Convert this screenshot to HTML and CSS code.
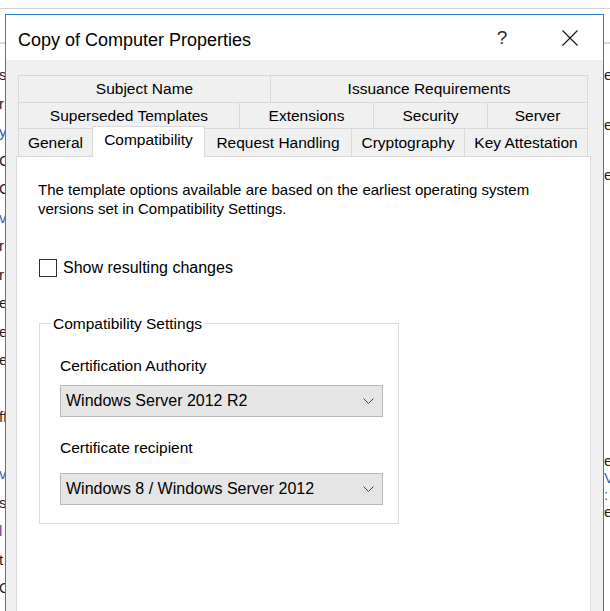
FILE: index.html
```html
<!DOCTYPE html>
<html lang="en">
<head>
<meta charset="utf-8">
<title>Copy of Computer Properties</title>
<link rel="stylesheet" href="styles.css">
</head>
<body>
<div class="desktop">
  <div class="backwin">
    <div class="back-header"></div>
    <div class="back-body">
      <div class="back-left">
        <div>s</div><div>r</div><div class="blue">y</div><div>C</div><div>C</div>
        <div class="blue">v</div><div>r</div><div>r</div><div>e</div><div>e</div>
        <div>e</div><div>&nbsp;</div><div>ff</div><div>&nbsp;</div><div class="blue">v</div>
        <div>s</div><div class="purple">l</div><div>t</div><div>O</div>
      </div>
      <div class="back-right">
        <div class="grp1"><div>e</div><div>&nbsp;</div><div>e</div><div>&nbsp;</div><div>e</div></div>
        <div class="grp2"><div>e</div><div class="blue">V</div><div class="blue">:</div><div>e</div></div>
      </div>
    </div>
  </div>

  <div class="dialog">
    <div class="titlebar">
      <span class="title">Copy of Computer Properties</span>
      <span class="help">?</span>
      <svg class="close" width="16" height="16" viewBox="0 0 16 16"><path d="M0.5 0.5 L15.5 15.5 M15.5 0.5 L0.5 15.5" stroke="#111" stroke-width="1.1" fill="none"/></svg>
    </div>
    <div class="content">
      <div class="tabs">
        <div class="tabrow row1">
          <div class="tab">Subject Name</div>
          <div class="tab last">Issuance Requirements</div>
        </div>
        <div class="tabrow row2">
          <div class="tab">Superseded Templates</div>
          <div class="tab">Extensions</div>
          <div class="tab">Security</div>
          <div class="tab last">Server</div>
        </div>
        <div class="tabrow row3">
          <div class="tab">General</div>
          <div class="tab selected">Compatibility</div>
          <div class="tab">Request Handling</div>
          <div class="tab">Cryptography</div>
          <div class="tab last">Key Attestation</div>
        </div>
      </div>
      <div class="panel">
        <p class="intro">The template options available are based on the earliest operating system versions set in Compatibility Settings.</p>
        <label class="check"><span class="box"></span><span>Show resulting changes</span></label>
        <fieldset class="group">
          <legend>Compatibility Settings</legend>
          <div class="field-label first">Certification Authority</div>
          <div class="combo first">
            <span>Windows Server 2012 R2</span>
            <svg width="11" height="6" viewBox="0 0 11 6"><polyline points="0.5,0.5 5.5,5.5 10.5,0.5" fill="none" stroke="#444" stroke-width="1"/></svg>
          </div>
          <div class="field-label second">Certificate recipient</div>
          <div class="combo">
            <span>Windows 8 / Windows Server 2012</span>
            <svg width="11" height="6" viewBox="0 0 11 6"><polyline points="0.5,0.5 5.5,5.5 10.5,0.5" fill="none" stroke="#444" stroke-width="1"/></svg>
          </div>
        </fieldset>
      </div>
    </div>
  </div>
</div>
</body>
</html>
```
FILE: styles.css
```css
* { box-sizing: border-box; }
html, body { margin: 0; padding: 0; }
body {
  width: 610px;
  height: 611px;
  overflow: hidden;
  background: #fff;
  font-family: "Liberation Sans", Arial, sans-serif;
  color: #000;
}
.desktop {
  position: relative;
  width: 610px;
  height: 611px;
  overflow: hidden;
}

/* background window */
.backwin {
  position: absolute;
  left: 0; right: 0; top: 8px; bottom: 0;
  border-top: 1px solid #d3d3d3;
  background: #fff;
  font-size: 15px;
  color: #1e1e1e;
}
.back-header {
  height: 35px;
  border-bottom: 2px solid #dadada;
}
.back-body {
  display: flex;
  justify-content: space-between;
}
.back-left {
  margin-left: -1px;
  padding-top: 17px;
  line-height: 28.5px;
}
.back-right {
  width: 6px;
  white-space: nowrap;
  padding-top: 18px;
}
.grp1 { line-height: 25px; }
.grp2 { line-height: 17px; margin-top: 265px; }
.blue { color: #2a66c0; }
.purple { color: #6a3b9c; }

/* dialog */
.dialog {
  position: absolute;
  left: 5px;
  top: 14px;
  width: 599px;
  height: 640px;
  border: 1px solid #2b80d5;
  background: #f0f0f0;
  display: flex;
  flex-direction: column;
}
.titlebar {
  height: 45px;
  background: #fff;
  display: flex;
  align-items: center;
  padding-left: 12px;
}
.title {
  flex: 1;
  font-size: 18px;
  line-height: 18px;
  margin-top: 4px;
}
.help {
  width: 16px;
  text-align: center;
  font-size: 19px;
  line-height: 19px;
  color: #2a2a2a;
  margin-right: 52px;
}
.close {
  display: block;
  margin-right: 25px;
}
.content {
  flex: 1;
  display: flex;
  flex-direction: column;
  padding: 15px 12px 0 10px;
}

/* tabs */
.tabs {
  margin: 0 3px 0 2px;
  position: relative;
  z-index: 1;
}
.tabrow { display: grid; }
.row1 { grid-template-columns: 252px 1fr; height: 27px; }
.row2 { grid-template-columns: 221px 134px 114px 1fr; height: 26px; }
.row3 { grid-template-columns: 74px 112px 147px 113px 1fr; height: 28px; }
.tab {
  border-top: 1px solid #d9d9d9;
  border-left: 1px solid #d9d9d9;
  background: #f0f0f0;
  display: flex;
  align-items: center;
  justify-content: center;
  font-size: 15.5px;
  white-space: nowrap;
  overflow: hidden;
}
.tab.last { border-right: 1px solid #d9d9d9; }
.row3 .tab { padding-top: 1px; }
.tab.selected {
  background: #fff;
  border-right: 1px solid #d9d9d9;
  margin: -2px -1px -1px 0;
  padding-top: 0;
  padding-bottom: 4px;
  position: relative;
  z-index: 2;
}

/* panel */
.panel {
  flex: 1;
  background: #fff;
  border: 1px solid #d9d9d9;
  padding: 23px 20px 0 21px;
}
.intro {
  margin: 0;
  max-width: 520px;
  font-size: 15px;
  line-height: 19px;
}
.check {
  display: flex;
  align-items: center;
  margin: 40px 0 0 1px;
  font-size: 16px;
  line-height: 19px;
}
.box {
  width: 18px;
  height: 18px;
  border: 1px solid #333;
  background: #fff;
  margin-right: 6px;
}
.group {
  margin: 37px 0 0 1px;
  width: 360px;
  border: 1px solid #dcdcdc;
  padding: 23px 15px 18px 20px;
  min-width: 0;
}
.group legend {
  font-size: 15.5px;
  line-height: 19px;
  padding: 0 2px;
  margin-left: -9px;
}
.field-label {
  font-size: 15.5px;
  line-height: 20px;
}
.field-label.first { margin-bottom: 9px; }
.field-label.second { margin-bottom: 15px; }
.combo {
  height: 32px;
  background: #e5e5e5;
  border: 1px solid #bababa;
  display: flex;
  align-items: center;
  justify-content: space-between;
  padding: 0 8px 0 5px;
  font-size: 16px;
}
.combo svg { display: block; }
.combo.first { margin-bottom: 21px; }
```
